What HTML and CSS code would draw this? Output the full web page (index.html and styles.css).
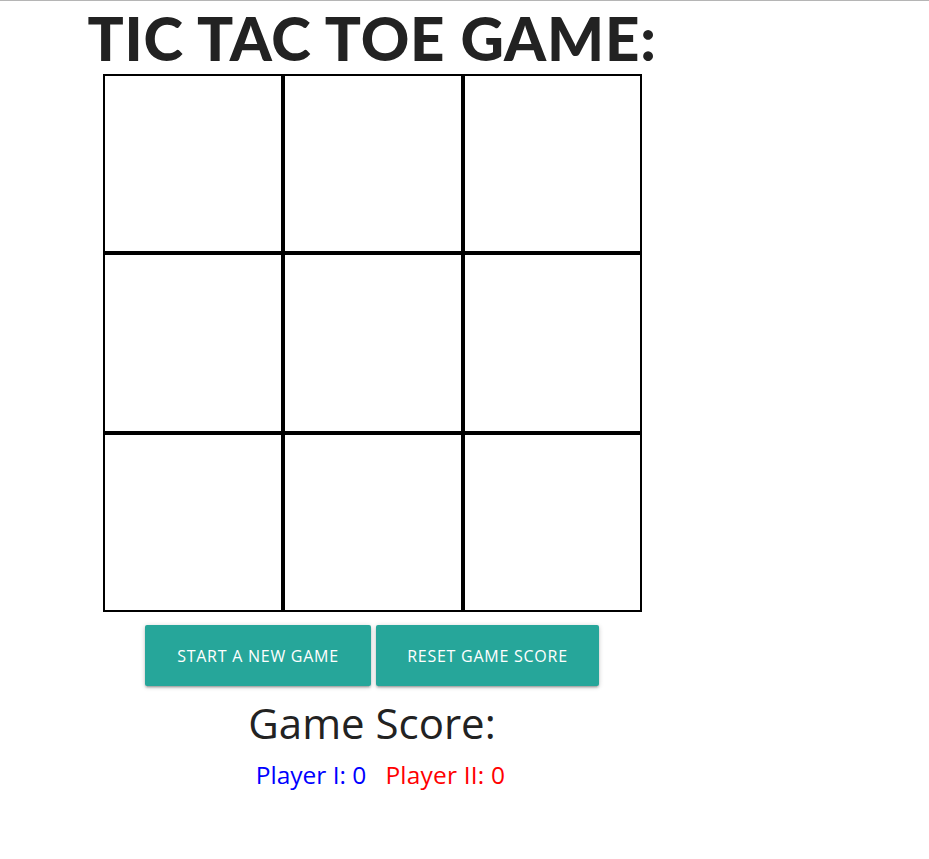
FILE: index.html
```html
<!DOCTYPE html>
<html lang="en">
<head>
<meta charset="utf-8">
<title>Tic Tac Toe</title>
<link rel="stylesheet" href="styles.css">
</head>
<body>
<div class="topline"></div>
<main class="game">
  <h1 class="title">TIC TAC TOE GAME:</h1>
  <div class="board">
    <div class="cell"></div><div class="cell"></div><div class="cell"></div>
    <div class="cell"></div><div class="cell"></div><div class="cell"></div>
    <div class="cell"></div><div class="cell"></div><div class="cell"></div>
  </div>
  <div class="actions">
    <button class="btn btn-start">START A NEW GAME</button>
    <button class="btn btn-reset">RESET GAME SCORE</button>
  </div>
  <h2 class="score-title">Game Score:</h2>
  <div class="scores">
    <span class="p1">Player I: 0</span>
    <span class="p2">Player II: 0</span>
  </div>
</main>
</body>
</html>
```

FILE: styles.css
```css
html, body {
  margin: 0;
  padding: 0;
  background: #fff;
}
body {
  font-family: "Open Sans", "Noto Sans", sans-serif;
}
.topline {
  height: 1px;
  background: #b5b5b5;
}
.game {
  width: 744px;
  display: flex;
  flex-direction: column;
  align-items: center;
}
.title {
  margin: 4px 0 0;
  font-family: Lato, "Open Sans", sans-serif;
  font-weight: 900;
  font-size: 60px;
  line-height: 66px;
  color: #222;
  letter-spacing: 0.8px;
}
.board {
  margin-top: 3px;
  width: 535px;
  height: 534px;
  padding: 2px;
  background: #000;
  display: grid;
  grid-template-columns: 176px 176px 175px;
  grid-template-rows: 175px 176px 175px;
  gap: 4px;
}
.cell {
  background: #fff;
}
.actions {
  margin-top: 13px;
  display: flex;
  gap: 5px;
}
.btn {
  height: 61px;
  border: none;
  border-radius: 2px;
  background: #26a69a;
  color: #fff;
  font-family: "Open Sans", "Noto Sans", sans-serif;
  font-size: 16px;
  letter-spacing: 0.75px;
  box-shadow: 0 2px 2px 0 rgba(0,0,0,0.14), 0 3px 1px -2px rgba(0,0,0,0.12), 0 1px 5px 0 rgba(0,0,0,0.2);
  padding: 0;
}
.btn-start { width: 226px; }
.btn-reset { width: 223px; }
.score-title {
  margin: 11px 0 0;
  font-weight: 400;
  font-size: 42px;
  line-height: 52px;
  color: #222;
}
.scores {
  margin-top: 9px;
  padding-left: 17px;
  display: flex;
  gap: 19px;
  font-size: 24.5px;
  line-height: 34px;
}
.p1 { color: #0000ff; }
.p2 { color: #ff0000; letter-spacing: 0.2px; }
```
